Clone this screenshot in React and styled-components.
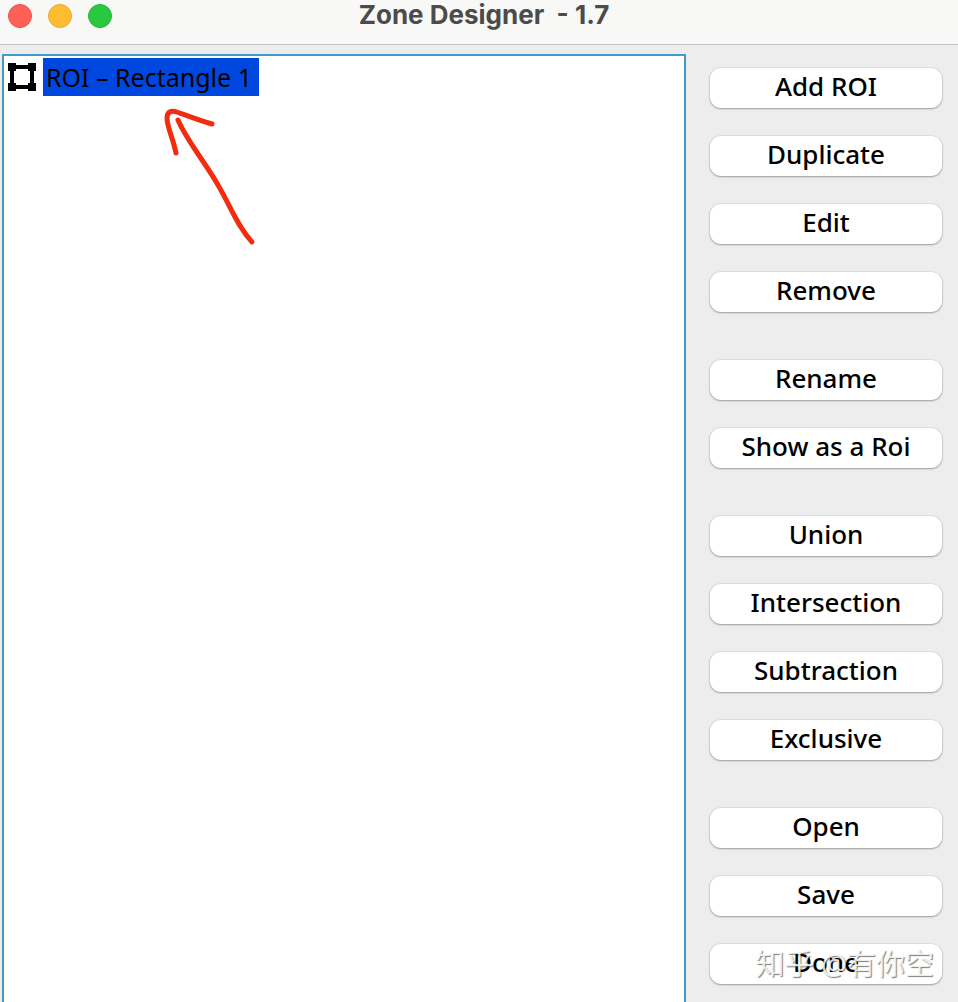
import React from 'react';
import styled, { createGlobalStyle } from 'styled-components';

const GROUPS = [
  ['Add ROI', 'Duplicate', 'Edit', 'Remove'],
  ['Rename', 'Show as a Roi'],
  ['Union', 'Intersection', 'Subtraction', 'Exclusive'],
  ['Open', 'Save', 'Done'],
];

function RectangleIcon() {
  return (
    <svg width="28" height="28" viewBox="0 0 28 28" aria-hidden="true">
      <rect x="4" y="4" width="20" height="20" fill="#fff" stroke="#000" strokeWidth="4" />
      <path d="M0 0h8v8H0zM20 0h8v8h-8zM0 20h8v8H0zM20 20h8v8h-8z" fill="#000" />
    </svg>
  );
}

function Arrow() {
  return (
    <ArrowDrawing width="100" height="150" viewBox="0 0 100 150" aria-hidden="true">
      <path d="M18 53C15 38 9 27 9 18C9 12 13 10 19 12C30 16 43 21 54 24" />
      <path d="M20 20C29 41 49 65 60 85C72 105 79 126 94 142" />
    </ArrowDrawing>
  );
}

function App() {
  return (
    <Window>
      <GlobalStyle />
      <TitleBar>
        <Lights>
          <Light type="button" aria-label="Close" $color="#fe5f57" $edge="#e9524a" />
          <Light type="button" aria-label="Minimize" $color="#febc2e" $edge="#e9aa35" />
          <Light type="button" aria-label="Zoom" $color="#28c840" $edge="#27b53b" />
        </Lights>
        <Title>{'Zone Designer  - 1.7'}</Title>
      </TitleBar>
      <Main>
        <ZoneList>
          <Zone>
            <RectangleIcon />
            <ZoneName>ROI – Rectangle 1</ZoneName>
          </Zone>
          <Arrow />
        </ZoneList>
        <Sidebar>
          {GROUPS.map(actions => (
            <Group key={actions[0]}>
              {actions.map(action => (
                <Action key={action} type="button">{action}</Action>
              ))}
            </Group>
          ))}
          <Watermark>知乎 @有你空</Watermark>
        </Sidebar>
      </Main>
    </Window>
  );
}

const GlobalStyle = createGlobalStyle`
  * {
    box-sizing: border-box;
  }

  body {
    background-color: #ededed;
    color: #000;
    font-family: "Noto Sans", "Noto Sans CJK SC", sans-serif;
    margin: 0;
  }
`;

const Window = styled.div`
  display: flex;
  flex-direction: column;
  min-height: 100vh;
`;

const TitleBar = styled.header`
  align-items: center;
  background-color: #f8f8f6;
  border-bottom: 1px solid #c6c6c6;
  display: grid;
  grid-template-columns: 120px 1fr 110px;
  height: 45px;
  padding-bottom: 12px;
`;

const Lights = styled.div`
  display: flex;
  gap: 16px;
  padding-left: 8px;
`;

const Light = styled.button`
  background-color: ${props => props.$color};
  border: 1px solid ${props => props.$edge};
  border-radius: 50%;
  height: 24px;
  padding: 0;
  width: 24px;
`;

const Title = styled.h1`
  color: #4b4b4a;
  font-family: Inter, sans-serif;
  font-size: 26px;
  font-weight: 700;
  line-height: 28px;
  margin: 0;
  padding-bottom: 2px;
  text-align: center;
  white-space: pre;
`;

const Main = styled.main`
  display: flex;
  flex: 1;
`;

const ZoneList = styled.section`
  background-color: #fff;
  border: 2px solid #3f9bc9;
  border-bottom: 0;
  flex: 1;
  margin: 9px 0 0 2px;
  position: relative;
`;

const Zone = styled.div`
  align-items: center;
  display: flex;
  gap: 7px;
  padding: 2px 4px;
`;

const ZoneName = styled.span`
  background-color: #0047e0;
  font-size: 25px;
  line-height: 38px;
  padding: 0 7px 0 3px;
`;

const ArrowDrawing = styled.svg`
  fill: none;
  left: 154px;
  position: absolute;
  stroke: #f32c10;
  stroke-linecap: round;
  stroke-linejoin: round;
  stroke-width: 5px;
  top: 44px;
`;

const Sidebar = styled.aside`
  display: flex;
  flex-direction: column;
  gap: 48px;
  padding: 23px 16px 18px 24px;
  position: relative;
  width: 272px;
`;

const Group = styled.div`
  display: flex;
  flex-direction: column;
  gap: 28px;
`;

const Action = styled.button`
  background-color: #fff;
  border: 0;
  border-radius: 11px;
  box-shadow: 0 0 1px 1px rgba(0, 0, 0, 0.06), 0 1px 2px rgba(0, 0, 0, 0.3);
  color: #000;
  font-family: inherit;
  font-size: 26px;
  font-weight: 500;
  height: 40px;
  line-height: 36px;
  padding: 0 0 4px;
`;

const Watermark = styled.span`
  bottom: 18px;
  color: rgba(255, 255, 255, 0.85);
  font-size: 29px;
  line-height: 40px;
  pointer-events: none;
  position: absolute;
  right: 24px;
  text-shadow: 1px 1px 1px rgba(0, 0, 0, 0.5);
  white-space: nowrap;
`;

export default App;
